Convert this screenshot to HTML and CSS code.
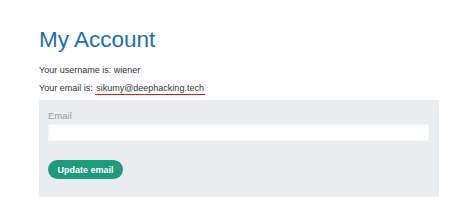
FILE: index.html
```html
<!DOCTYPE html>
<html lang="en">
<head>
  <meta charset="UTF-8">
  <title>My Account</title>
  <link rel="stylesheet" href="styles.css">
</head>
<body>
  <div class="account">
    <h1>My Account</h1>
    <p class="info">Your username is: wiener</p>
    <p class="info info-email">Your email is: <span class="marked">sikumy@deephacking.tech</span></p>
    <form class="email-form">
      <label for="email">Email</label>
      <input type="email" id="email" name="email">
      <button type="submit" class="btn">Update email</button>
    </form>
  </div>
</body>
</html>
```
FILE: styles.css
```css
body {
  margin: 0;
  background: #fff;
  font-family: 'Liberation Sans', Arial, Helvetica, sans-serif;
  color: #333;
}
.account {
  width: 400px;
  padding-left: 39px;
}
h1 {
  margin: 27px 0 0 0;
  font-size: 22.5px;
  line-height: 26px;
  font-weight: normal;
  color: #1a6fb5;
}
.info {
  margin: 7.5px 0 0 0;
  font-size: 9px;
  line-height: 18px;
}
.info-email {
  margin-top: 0;
}
.marked {
  border-bottom: 1.5px solid #e0161b;
  padding: 0 1px 1px 1px;
}
.email-form {
  display: flex;
  flex-direction: column;
  align-items: flex-start;
  margin-top: 3.5px;
  background: #e9edf0;
  padding: 8px 10px 18px 9px;
}
.email-form label {
  font-size: 9.5px;
  line-height: 16px;
  color: #9aa0a3;
}
.email-form input {
  box-sizing: border-box;
  width: 100%;
  height: 17px;
  margin: 0;
  border: 1px solid #f4f6f7;
  background: #fff;
  outline: none;
}
.btn {
  margin-top: 19px;
  height: 19px;
  padding: 0 9.5px;
  border: none;
  border-radius: 10px;
  background: #1e9b7d;
  color: #fff;
  font-family: inherit;
  font-size: 9px;
  font-weight: bold;
  cursor: pointer;
}
```
